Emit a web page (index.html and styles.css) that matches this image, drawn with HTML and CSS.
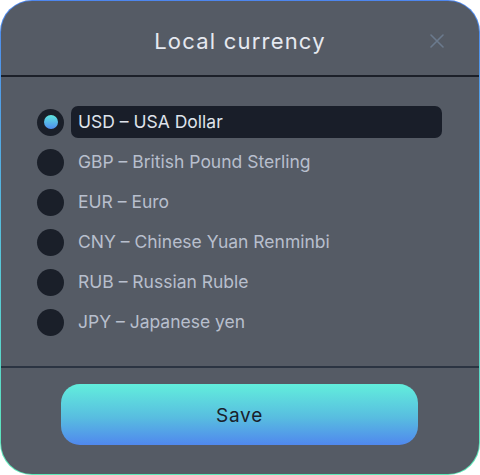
FILE: index.html
```html
<!DOCTYPE html>
<html>
	<head>
		<meta charset="UTF-8">
		<title>Local currency</title>
		<link rel="stylesheet" href="styles.css">
	</head>
	<body>
		<div class="frame">
			<div class="dialog">
				<div class="head">
					<h1>Local currency</h1>
					<span class="close">
						<svg width="14" height="14" viewBox="0 0 14 14"><path d="M1 1L13 13M13 1L1 13" stroke="#6b7a8d" stroke-width="1.6" stroke-linecap="round"/></svg>
					</span>
				</div>
				<ul class="list">
					<li class="on"><span class="radio"></span><span class="label">USD – USA Dollar</span></li>
					<li><span class="radio"></span><span class="label">GBP – British Pound Sterling</span></li>
					<li><span class="radio"></span><span class="label">EUR – Euro</span></li>
					<li><span class="radio"></span><span class="label">CNY – Chinese Yuan Renminbi</span></li>
					<li><span class="radio"></span><span class="label">RUB – Russian Ruble</span></li>
					<li><span class="radio"></span><span class="label">JPY – Japanese yen</span></li>
				</ul>
				<div class="foot">
					<button class="save">Save</button>
				</div>
			</div>
		</div>
	</body>
</html>
```
FILE: styles.css
```css
html, body {
	margin: 0;
	padding: 0;
	background: #fff;
}
.frame {
	width: 480px;
	height: 475px;
	box-sizing: border-box;
	padding: 1px;
	border-radius: 32px;
	background: linear-gradient(180deg, #4d86ee 0%, #58c6d8 55%, #5eeab8 100%);
}
.dialog {
	height: 100%;
	border-radius: 31px;
	background-color: #555b65;
	display: flex;
	flex-direction: column;
	font-family: Inter, "Liberation Sans", sans-serif;
	overflow: hidden;
}
.head {
	position: relative;
	height: 74px;
	border-bottom: 2px solid #1c2029;
	display: flex;
	align-items: center;
	justify-content: center;
}
.head h1 {
	margin: 0;
	font-family: Inter, sans-serif;
	font-weight: 400;
	font-size: 22px;
	letter-spacing: 1.2px;
	color: #e6e9f0;
	padding-top: 5px;
}
.close {
	position: absolute;
	right: 35px;
	top: 33px;
	width: 14px;
	height: 14px;
	display: flex;
}
.list {
	list-style: none;
	margin: 0;
	padding: 25px 37px 0 36px;
	flex: 1;
	border-bottom: 2px solid #2b3442;
}
.list li {
	display: flex;
	align-items: center;
	height: 40px;
	gap: 7px;
}
.radio {
	width: 27px;
	height: 27px;
	border-radius: 50%;
	background-color: #1a1f29;
	display: flex;
	align-items: center;
	justify-content: center;
	flex: none;
}
.on .radio::after {
	content: "";
	width: 14px;
	height: 14px;
	border-radius: 50%;
	background: linear-gradient(180deg, #5fe6de, #4f8cf0);
}
.label {
	flex: 1;
	height: 32px;
	line-height: 32px;
	padding-left: 7px;
	border-radius: 7px;
	font-size: 17.5px;
	font-weight: 400;
	color: #b8bfcd;
}
.on .label {
	background-color: #191e29;
	color: #dfe3eb;
}
.foot {
	height: 106px;
	padding: 16px 61px 0 60px;
	box-sizing: border-box;
}
.save {
	width: 100%;
	height: 61px;
	border: none;
	border-radius: 19px;
	background: linear-gradient(180deg, #62eedc 0%, #58bde0 55%, #5088ee 100%);
	font-family: Inter, sans-serif;
	font-size: 19px;
	font-weight: 400;
	letter-spacing: 0.8px;
	color: #1a202b;
	padding-top: 3px;
	cursor: pointer;
}
```
